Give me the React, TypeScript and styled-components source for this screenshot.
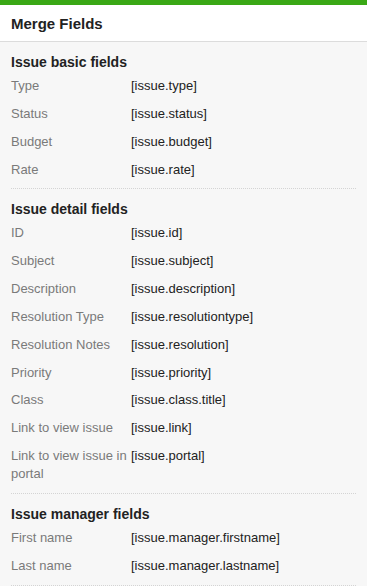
import React from 'react';
import styled, { createGlobalStyle } from 'styled-components';

const GlobalStyle = createGlobalStyle`
  html, body {
    margin: 0;
    padding: 0;
    background: #f7f7f7;
  }
  body {
    font-family: "Liberation Sans", Arial, Helvetica, sans-serif;
  }
`;

const Panel = styled.div`
  width: 367px;
  min-height: 586px;
  background: #f7f7f7;
  border-top: 5px solid #3aa815;
  box-sizing: border-box;
`;

const Header = styled.div`
  height: 37px;
  display: flex;
  align-items: center;
  padding: 0 11px;
  background: #ffffff;
  border-bottom: 1px solid #dcdcdc;
  box-sizing: border-box;
`;

const Title = styled.h2`
  margin: 0;
  font-size: 15px;
  font-weight: bold;
  color: #222;
`;

const Section = styled.section`
  margin: 0 11px;
  padding: 10px 0 5px;
  border-bottom: 1px dotted #d4d4d4;
`;

const SectionTitle = styled.h3`
  margin: 0;
  font-size: 14px;
  line-height: 20px;
  font-weight: bold;
  color: #222;
`;

const Row = styled.div`
  display: flex;
  padding: 5px 0 4.85px;
  font-size: 13px;
  line-height: 18px;
`;

const Label = styled.div`
  width: 120px;
  flex-shrink: 0;
  color: #7a7a7a;
`;

const Value = styled.div`
  color: #222;
`;

type Field = [string, string];

const sections: { title: string; fields: Field[] }[] = [
  {
    title: 'Issue basic fields',
    fields: [
      ['Type', '[issue.type]'],
      ['Status', '[issue.status]'],
      ['Budget', '[issue.budget]'],
      ['Rate', '[issue.rate]'],
    ],
  },
  {
    title: 'Issue detail fields',
    fields: [
      ['ID', '[issue.id]'],
      ['Subject', '[issue.subject]'],
      ['Description', '[issue.description]'],
      ['Resolution Type', '[issue.resolutiontype]'],
      ['Resolution Notes', '[issue.resolution]'],
      ['Priority', '[issue.priority]'],
      ['Class', '[issue.class.title]'],
      ['Link to view issue', '[issue.link]'],
      ['Link to view issue in portal', '[issue.portal]'],
    ],
  },
  {
    title: 'Issue manager fields',
    fields: [
      ['First name', '[issue.manager.firstname]'],
      ['Last name', '[issue.manager.lastname]'],
    ],
  },
];

const App: React.FC = () => {
  return (
    <>
      <GlobalStyle />
      <Panel>
        <Header>
          <Title>Merge Fields</Title>
        </Header>
        {sections.map((section) => (
          <Section key={section.title}>
            <SectionTitle>{section.title}</SectionTitle>
            {section.fields.map(([label, value]) => (
              <Row key={label}>
                <Label>{label}</Label>
                <Value>{value}</Value>
              </Row>
            ))}
          </Section>
        ))}
      </Panel>
    </>
  );
};

export default App;
